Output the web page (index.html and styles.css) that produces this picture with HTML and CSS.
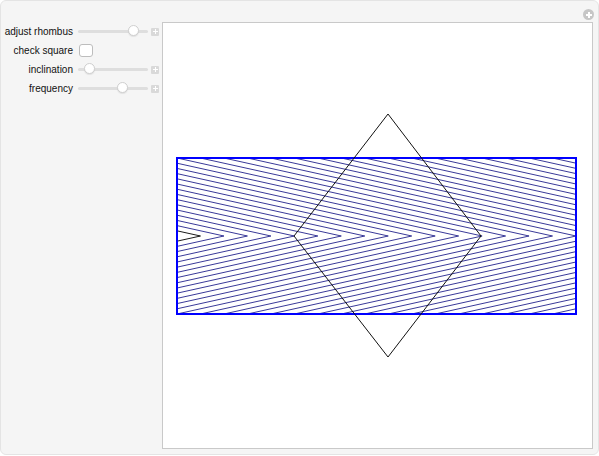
FILE: index.html
```html
<!DOCTYPE html>
<html lang="en">
  <head>
    <meta charset="UTF-8" />
    <title>rhombus illusion</title>
    <link rel="stylesheet" href="styles.css">
  </head>
  <body>
    <div class="frame">
      <span class="add-btn"></span>

      <div class="controls">
        <div class="row">
          <label>adjust rhombus</label>
          <div class="slider"><span class="thumb" style="left: 55px"></span></div>
          <span class="plus"></span>
        </div>
        <div class="row">
          <label>check square</label>
          <span class="check"></span>
        </div>
        <div class="row">
          <label>inclination</label>
          <div class="slider"><span class="thumb" style="left: 11px"></span></div>
          <span class="plus"></span>
        </div>
        <div class="row">
          <label>frequency</label>
          <div class="slider"><span class="thumb" style="left: 44px"></span></div>
          <span class="plus"></span>
        </div>
      </div>

      <div class="plot">
        <svg id="graphic" width="429" height="425" viewBox="163 23 429 425">
          <defs>
            <clipPath id="box">
              <rect x="177" y="158" width="399" height="156" />
            </clipPath>
          </defs>
          <g id="hatch" clip-path="url(#box)"></g>
          <rect x="177" y="158" width="399" height="156" fill="none" stroke="#0000ff" stroke-width="2" />
          <polygon points="388,114 481,236 388,357 294,236" fill="none" stroke="#111" stroke-width="1" />
        </svg>
      </div>
    </div>

    <script>
      const hatch = document.getElementById('hatch')
      const left = 177,
        mid = 236,
        step = 399 / 17,
        rise = 5.2
      for (let k = 1; k <= 40; k++) {
        const ax = left + k * step
        const len = 900
        const dy = (rise / step) * len
        const line = document.createElementNS('http://www.w3.org/2000/svg', 'polyline')
        line.setAttribute(
          'points',
          `${ax - len},${mid - dy} ${ax},${mid} ${ax - len},${mid + dy}`
        )
        line.setAttribute('class', k === 1 ? 'chev first' : 'chev')
        hatch.appendChild(line)
      }
    </script>
  </body>
</html>
```
FILE: styles.css
```css
body {
  margin: 0;
  background: #fff;
  font-family: "Liberation Sans", Arial, sans-serif;
}

.frame {
  position: relative;
  display: flex;
  width: 597px;
  height: 453px;
  border: 1px solid #e4e4e4;
  border-radius: 6px;
  background: #f5f5f5;
}

.add-btn {
  position: absolute;
  top: 8px;
  right: 4px;
  width: 11px;
  height: 11px;
  border-radius: 50%;
  background: #c6c6c6;
}
.add-btn::before,
.add-btn::after {
  content: "";
  position: absolute;
  background: #fff;
}
.add-btn::before {
  left: 2.5px;
  top: 4.5px;
  width: 6px;
  height: 2px;
}
.add-btn::after {
  left: 4.5px;
  top: 2.5px;
  width: 2px;
  height: 6px;
}

.controls {
  width: 161px;
  padding-top: 21px;
}

.row {
  display: flex;
  align-items: center;
  height: 19px;
}

.row label {
  width: 72px;
  padding-right: 5px;
  text-align: right;
  font-size: 10px;
  color: #111;
  white-space: nowrap;
}

.slider {
  position: relative;
  width: 70px;
  height: 3px;
  border-radius: 2px;
  background: #dedede;
}
.thumb {
  position: absolute;
  top: -5px;
  width: 11px;
  height: 11px;
  margin-left: -5.5px;
  border-radius: 50%;
  background: #fff;
  border: 1px solid #cfcfcf;
  box-sizing: border-box;
  box-shadow: 0 1px 1px rgba(0, 0, 0, 0.08);
}

.plus {
  position: relative;
  width: 8px;
  height: 8px;
  margin-left: 3px;
  background: #d9d9d9;
  border-radius: 1px;
}
.plus::before,
.plus::after {
  content: "";
  position: absolute;
  background: #fff;
}
.plus::before {
  left: 1.5px;
  top: 3.5px;
  width: 5px;
  height: 1px;
}
.plus::after {
  left: 3.5px;
  top: 1.5px;
  width: 1px;
  height: 5px;
}

.check {
  width: 14px;
  height: 13px;
  margin-left: 1px;
  box-sizing: border-box;
  border: 1px solid #bdbdbd;
  border-radius: 3px;
  background: #fff;
}

.plot {
  margin-top: 21px;
  width: 429px;
  height: 425px;
  border: 1px solid #c9c9c9;
  background: #fff;
}
.plot svg {
  display: block;
}

.chev {
  fill: none;
  stroke: #22228c;
  stroke-width: 0.9;
}
.chev.first {
  stroke: #000;
}
```
